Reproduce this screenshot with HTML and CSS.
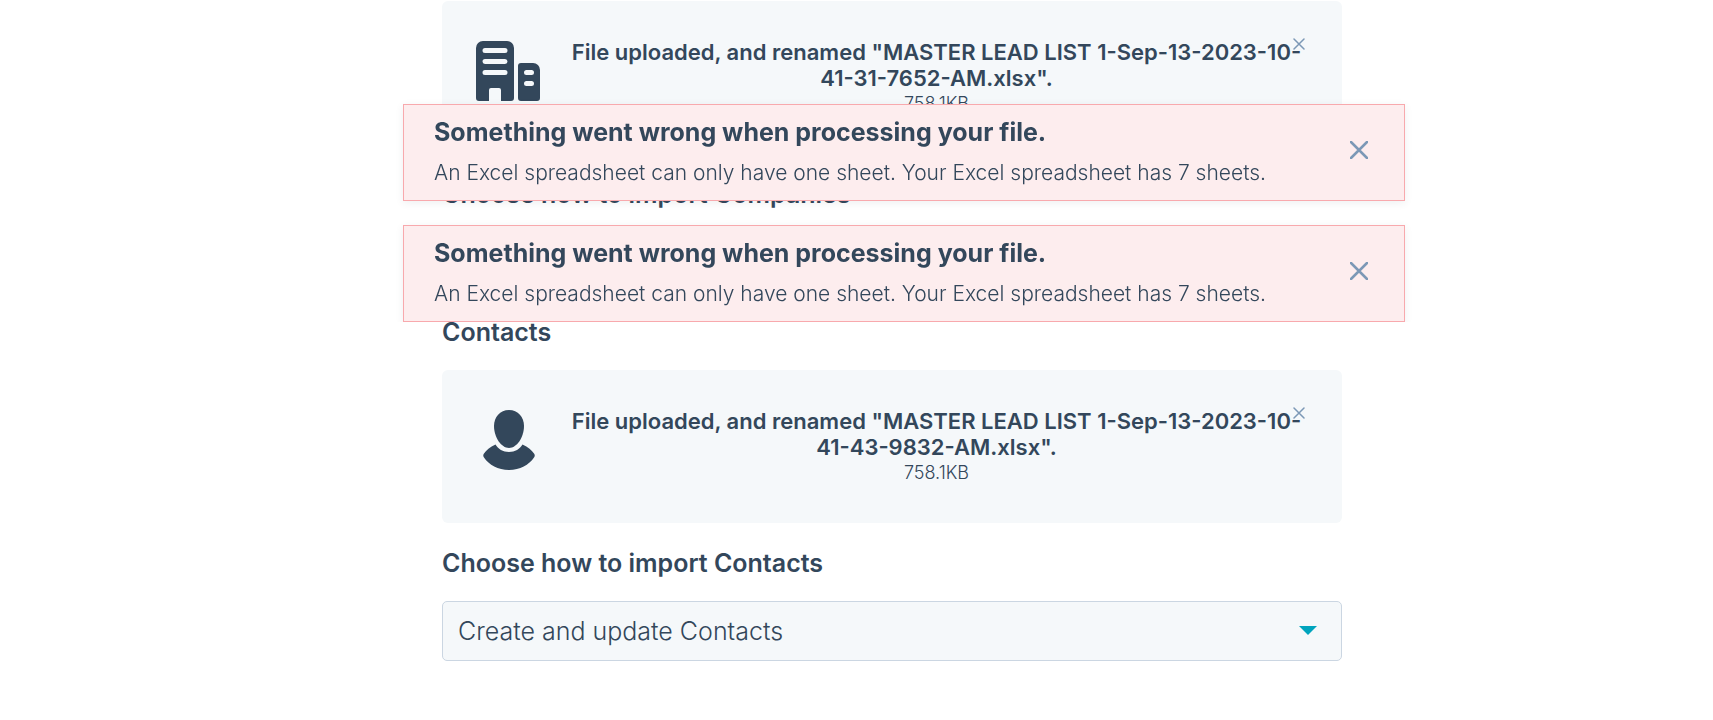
FILE: index.html
```html
<!DOCTYPE html>
<html lang="en">
<head>
    <meta charset="UTF-8">
    <meta name="viewport" content="width=device-width, initial-scale=1.0">
    <title>Import files</title>
    <link rel="stylesheet" href="styles.css">
</head>
<body>
    <main class="page">
        <div class="container">
            <div class="file-card">
                <div class="file-icon">
                    <svg width="66" height="60" viewBox="0 0 66 60" aria-hidden="true">
                        <path fill="#33475b" fill-rule="evenodd" d="M7 0h24a7 7 0 0 1 7 7v50a3 3 0 0 1-3 3H25V49a2 2 0 0 0-2-2h-8a2 2 0 0 0-2 2v11H3a3 3 0 0 1-3-3V7a7 7 0 0 1 7-7zM9 7a2 2 0 0 0 0 5h20a2 2 0 0 0 0-5zM9 18a2 2 0 0 0 0 5h20a2 2 0 0 0 0-5zM9 29a2 2 0 0 0 0 5h20a2 2 0 0 0 0-5zM45 22h12a7 7 0 0 1 7 7v28a3 3 0 0 1-3 3H45a3 3 0 0 1-3-3V25a3 3 0 0 1 3-3zM50.500 29a2 2 0 0 0 0 5h5a2 2 0 0 0 0-5zM50.500 40a2 2 0 0 0 0 5h5a2 2 0 0 0 0-5z"/>
                    </svg>
                </div>
                <div class="file-info">
                    <p class="file-name">File uploaded, and renamed "MASTER LEAD LIST 1-Sep-13-2023-10-<br>41-31-7652-AM.xlsx".</p>
                    <p class="file-size">758.1KB</p>
                </div>
                <button type="button" class="close file-close" aria-label="Remove file">
                    <svg width="12" height="12" viewBox="0 0 12 12"><path d="M1 1l10 10M11 1L1 11"/></svg>
                </button>
            </div>

            <label class="title" for="importCompanies">Choose how to import Companies</label>
            <div class="select-box">
                <select id="importCompanies">
                    <option>Create and update Companies</option>
                </select>
            </div>

            <h2 class="title">Contacts</h2>
            <div class="file-card">
                <div class="file-icon">
                    <svg width="52" height="60" viewBox="0 0 52 60" aria-hidden="true">
                        <path fill="#33475b" d="M26 0c9 0 15 7 15 16 0 11-7 22-15 22S11 27 11 16C11 7 17 0 26 0z"/>
                        <path fill="#33475b" d="M12.500 34.500C15 39 20 42 26 42s11-3 13.500-7.500C45 37 49 40.500 51 43.500c1 1.500 1 2.500 0 4C46 55 37 60 26 60S6 55 1 47.500c-1-1.500-1-2.500 0-4 2-3 6-6.500 11.500-9z"/>
                    </svg>
                </div>
                <div class="file-info">
                    <p class="file-name">File uploaded, and renamed "MASTER LEAD LIST 1-Sep-13-2023-10-<br>41-43-9832-AM.xlsx".</p>
                    <p class="file-size">758.1KB</p>
                </div>
                <button type="button" class="close file-close" aria-label="Remove file">
                    <svg width="12" height="12" viewBox="0 0 12 12"><path d="M1 1l10 10M11 1L1 11"/></svg>
                </button>
            </div>

            <label class="title" for="importContacts">Choose how to import Contacts</label>
            <div class="select-box">
                <select id="importContacts">
                    <option>Create and update Contacts</option>
                </select>
            </div>
        </div>
    </main>

    <!-- Alerts float over the page -->
    <div class="alerts">
        <div class="alert" role="alert">
            <div class="alert-text">
                <h2>Something went wrong when processing your file.</h2>
                <p>An Excel spreadsheet can only have one sheet. Your Excel spreadsheet has 7 sheets.</p>
            </div>
            <button type="button" class="close" aria-label="Close">
                <svg width="18" height="18" viewBox="0 0 18 18"><path d="M1 1l16 16M17 1L1 17"/></svg>
            </button>
        </div>
        <div class="alert" role="alert">
            <div class="alert-text">
                <h2>Something went wrong when processing your file.</h2>
                <p>An Excel spreadsheet can only have one sheet. Your Excel spreadsheet has 7 sheets.</p>
            </div>
            <button type="button" class="close" aria-label="Close">
                <svg width="18" height="18" viewBox="0 0 18 18"><path d="M1 1l16 16M17 1L1 17"/></svg>
            </button>
        </div>
    </div>
</body>
</html>
```
FILE: styles.css
```css
* {
    box-sizing: border-box;
}
body {
    font-family: Inter, "Open Sans", sans-serif;
    font-weight: 300;
    margin: 0;
    color: #33475b;
    background: #fff;
}
h2, p {
    margin: 0;
}
.page {
    padding: 1px 0 56px 71px;
}
.container {
    max-width: 900px;
    margin: 0 auto;
}
.file-card {
    position: relative;
    display: flex;
    padding: 38px 38px 37px 33px;
    background: #f5f8fa;
    border-radius: 6px;
}
.file-icon {
    display: flex;
    justify-content: center;
    flex: 0 0 68px;
    padding-top: 2px;
}
.file-info {
    flex: 1;
    padding-left: 26px;
    text-align: center;
}
.file-name {
    font-size: 22px;
    font-weight: 600;
    line-height: 26px;
    white-space: nowrap;
}
.file-size {
    font-size: 18px;
    line-height: 26px;
}
.close {
    display: flex;
    padding: 0;
    border: none;
    background: none;
    cursor: pointer;
}
.close path {
    fill: none;
    stroke: #7c98b6;
    stroke-width: 2.5;
    stroke-linecap: round;
}
.file-close {
    position: absolute;
    top: 37px;
    right: 37px;
}
.file-close path {
    stroke-width: 1.5;
}
.title {
    display: block;
    margin: 24px 0 22px;
    font-size: 25px;
    font-weight: 600;
    line-height: 32px;
}
.select-box {
    position: relative;
}
.select-box::after {
    content: "";
    position: absolute;
    top: 25px;
    right: 25px;
    border: 9px solid transparent;
    border-top-color: #00a4bd;
    border-bottom: none;
    pointer-events: none;
}
.select-box select {
    display: block;
    width: 100%;
    height: 60px;
    padding: 0 48px 0 15px;
    border: 1px solid #cbd6e2;
    border-radius: 5px;
    background: #f5f8fa;
    color: #33475b;
    font: inherit;
    font-size: 25px;
    appearance: none;
}
.alerts {
    position: fixed;
    top: 104px;
    left: 95px;
    right: 0;
    display: flex;
    flex-direction: column;
    align-items: center;
    gap: 24px;
    clip-path: inset(-10px -10px 0);
}
.alert {
    display: flex;
    justify-content: space-between;
    align-items: center;
    width: 100%;
    max-width: 1002px;
    padding: 11px 36px 11px 30px;
    border: 1px solid #f8a9ad;
    background: #fdedee;
    box-shadow: 0 2px 8px rgba(45, 62, 80, 0.08);
}
.alert h2 {
    margin-bottom: 9px;
    font-size: 25px;
    font-weight: 700;
    line-height: 32px;
}
.alert p {
    font-size: 21px;
    line-height: 32px;
}
.alert .close {
    margin-bottom: 6px;
}
```
